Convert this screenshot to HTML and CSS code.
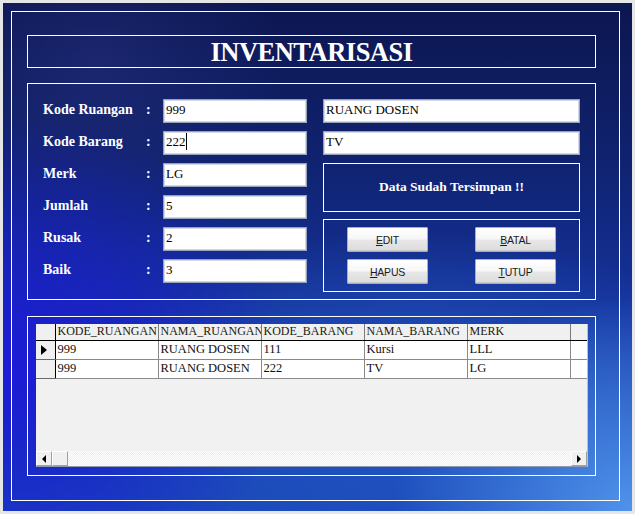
FILE: index.html
```html
<!DOCTYPE html>
<html>
<head>
<meta charset="utf-8">
<link rel="stylesheet" href="styles.css">
</head>
<body>
<div class="window">
  <div class="frame">
    <div class="title-box"><h1 class="title">INVENTARISASI</h1></div>

    <div class="form-box">
      <div class="left-col">
        <div class="row"><span class="label">Kode Ruangan</span><span class="colon">:</span><div class="input">999</div></div>
        <div class="row"><span class="label">Kode Barang</span><span class="colon">:</span><div class="input">222<span class="caret"></span></div></div>
        <div class="row"><span class="label">Merk</span><span class="colon">:</span><div class="input">LG</div></div>
        <div class="row"><span class="label">Jumlah</span><span class="colon">:</span><div class="input">5</div></div>
        <div class="row"><span class="label">Rusak</span><span class="colon">:</span><div class="input">2</div></div>
        <div class="row"><span class="label">Baik</span><span class="colon">:</span><div class="input">3</div></div>
      </div>
      <div class="right-col">
        <div class="input wide">RUANG DOSEN</div>
        <div class="input wide">TV</div>
        <div class="msg">Data Sudah Tersimpan !!</div>
        <div class="btn-box">
          <button class="btn"><u>E</u>DIT</button>
          <button class="btn"><u>B</u>ATAL</button>
          <button class="btn"><u>H</u>APUS</button>
          <button class="btn"><u>T</u>UTUP</button>
        </div>
      </div>
    </div>

    <div class="grid-box">
      <div class="grid">
        <table class="data">
          <colgroup>
            <col class="c-ind"><col class="c-col"><col class="c-col"><col class="c-col"><col class="c-col"><col class="c-col"><col class="c-rest">
          </colgroup>
          <thead>
            <tr>
              <th class="ind"></th>
              <th>KODE_RUANGAN</th>
              <th>NAMA_RUANGAN</th>
              <th>KODE_BARANG</th>
              <th>NAMA_BARANG</th>
              <th>MERK</th>
              <th class="rest"></th>
            </tr>
          </thead>
          <tbody>
            <tr>
              <td class="ind"><span class="pointer"></span></td>
              <td>999</td><td>RUANG DOSEN</td><td>111</td><td>Kursi</td><td>LLL</td><td class="rest"></td>
            </tr>
            <tr>
              <td class="ind"></td>
              <td>999</td><td>RUANG DOSEN</td><td>222</td><td>TV</td><td>LG</td><td class="rest"></td>
            </tr>
          </tbody>
        </table>
        <div class="filler"></div>
        <div class="hscroll">
          <div class="sb-btn"><span class="arrow-left"></span></div>
          <div class="sb-thumb"></div>
          <div class="sb-track"></div>
          <div class="sb-btn"><span class="arrow-right"></span></div>
        </div>
      </div>
    </div>
  </div>
</div>
</body>
</html>
```

FILE: styles.css
```css
* { box-sizing: border-box; }

html, body {
  margin: 0;
  padding: 0;
}

body {
  width: 635px;
  height: 514px;
  background: #e6e6e6;
  padding: 3px;
  font-family: "Liberation Serif", serif;
  overflow: hidden;
}

.window {
  width: 629px;
  height: 508px;
  padding: 8px;
  background:
    radial-gradient(ellipse 38% 42% at 100% 100%, rgba(85, 155, 240, 0.9), rgba(85, 155, 240, 0) 100%),
    radial-gradient(ellipse 45% 50% at 0% 72%, rgba(28, 26, 215, 1), rgba(28, 26, 215, 0) 100%),
    radial-gradient(ellipse 55% 35% at 65% 80%, rgba(40, 95, 200, 0.75), rgba(40, 95, 200, 0) 100%),
    radial-gradient(ellipse 30% 30% at 15% 12%, rgba(40, 50, 130, 0.5), rgba(40, 50, 130, 0) 100%),
    linear-gradient(180deg, #0c1650 0%, #10226e 30%, #1534a0 62%, #1846b8 100%);
}

.frame {
  width: 609px;
  height: 490px;
  border: 1px solid #ffffff;
  padding: 23px 23px 0 15px;
  display: flex;
  flex-direction: column;
}

.title-box {
  height: 33px;
  border: 1px solid #ffffff;
  display: flex;
  align-items: center;
  justify-content: center;
}

.title {
  margin: 0;
  color: #ffffff;
  font-family: "Liberation Serif", serif;
  font-weight: bold;
  font-size: 26.5px;
  letter-spacing: -0.5px;
  line-height: 1;
  padding-top: 1px;
}

.form-box {
  margin-top: 15px;
  border: 1px solid #ffffff;
  padding: 15px 15px 7px 15px;
  display: flex;
  gap: 16px;
  align-items: flex-start;
}

.left-col {
  display: flex;
  flex-direction: column;
  gap: 8px;
}

.row {
  display: flex;
  align-items: center;
  height: 24px;
}

.label {
  width: 103px;
  color: #ffffff;
  font-weight: bold;
  font-size: 14px;
  padding-bottom: 3px;
}

.colon {
  width: 17px;
  color: #ffffff;
  font-weight: bold;
  font-size: 14px;
  padding-bottom: 3px;
}

.input {
  width: 144px;
  height: 24px;
  background: #ffffff;
  border: 1px solid #97a1ba;
  box-shadow: inset 0 0 0 1px #d5d9e4;
  color: #000000;
  font-size: 13px;
  line-height: 18px;
  padding: 0 2px 3px 2px;
  display: flex;
  align-items: center;
}

.input.wide {
  width: 257px;
}

.caret {
  display: inline-block;
  width: 1px;
  height: 17px;
  background: #000000;
  margin-left: 0;
}

.right-col {
  display: flex;
  flex-direction: column;
  width: 257px;
}

.right-col .input + .input {
  margin-top: 8px;
}

.msg {
  margin-top: 8px;
  height: 49px;
  border: 1px solid #ffffff;
  color: #ffffff;
  font-weight: bold;
  font-size: 13.5px;
  display: flex;
  align-items: center;
  justify-content: center;
  padding-bottom: 1px;
}

.btn-box {
  margin-top: 7px;
  height: 73px;
  border: 1px solid #ffffff;
  padding: 7px 23px;
  display: grid;
  grid-template-columns: 81px 81px;
  grid-template-rows: 25px 25px;
  justify-content: space-between;
  row-gap: 7px;
}

.btn {
  margin: 0;
  padding: 0;
  width: 81px;
  height: 25px;
  border: 1px solid #a9afb9;
  border-radius: 1px;
  background: linear-gradient(180deg, #ffffff 0%, #f7f7f7 45%, #e6e6e6 55%, #dcdcdc 100%);
  box-shadow: inset 0 -1px 0 #c9c9c9;
  font-family: "Liberation Sans", sans-serif;
  font-size: 10.5px;
  color: #1a1a1a;
  letter-spacing: -0.2px;
}

.btn u {
  text-decoration: underline;
  text-underline-offset: 1px;
}

.grid-box {
  margin-top: 16px;
  height: 160px;
  border: 1px solid #ffffff;
  padding: 7px 7px 8px 8px;
}

.grid {
  height: 143px;
  background: #f0f1f0;
  display: flex;
  flex-direction: column;
  border-right: 1px solid #b9c1d0;
  border-bottom: 1px solid #8f99b0;
}

.data {
  border-collapse: collapse;
  table-layout: fixed;
  width: 551px;
  font-family: "Liberation Serif", serif;
  font-size: 12.5px;
  color: #111111;
}

.c-ind { width: 19px; }
.c-col { width: 103px; }
.c-rest { width: 17px; }

.data th {
  height: 16px;
  padding: 0 0 0 2px;
  text-align: left;
  font-weight: normal;
  font-size: 12px;
  background: #f0f0f0;
  color: #1a1a10;
  white-space: nowrap;
  overflow: hidden;
  border-right: 1px solid #7a7a7a;
  border-bottom: 1px solid #000000;
  line-height: 15px;
  vertical-align: middle;
}

.data th.rest {
  border-right: none;
}

.data td {
  height: 19px;
  padding: 0 0 1px 2px;
  background: #ffffff;
  white-space: nowrap;
  overflow: hidden;
  border-right: 1px solid #8a8a8a;
  border-bottom: 1px solid #8a8a8a;
  line-height: 17px;
  vertical-align: middle;
}

.data td.rest {
  border-right: none;
}

.data .ind {
  background: #f0f0f0;
  border-right: 1px solid #000000;
  padding: 0;
}

.data td.ind {
  border-bottom: 1px solid #6a6a6a;
}

.pointer {
  display: block;
  width: 0;
  height: 0;
  margin-left: 5px;
  border-top: 5px solid transparent;
  border-bottom: 5px solid transparent;
  border-left: 6px solid #000000;
}

.filler {
  flex: 1;
}

.hscroll {
  height: 15px;
  display: flex;
  background-color: #f7f7f7;
  background-image: repeating-conic-gradient(#ffffff 0% 25%, #eeeeee 0% 50%);
  background-size: 2px 2px;
}

.sb-btn {
  width: 16px;
  height: 15px;
  background: #f0f0f0;
  border: 1px solid;
  border-color: #ffffff #a0a0a0 #a0a0a0 #ffffff;
  display: flex;
  align-items: center;
  justify-content: center;
}

.sb-thumb {
  width: 16px;
  height: 15px;
  background: #f0f0f0;
  border: 1px solid;
  border-color: #ffffff #a0a0a0 #a0a0a0 #ffffff;
}

.sb-track {
  flex: 1;
}

.arrow-left {
  width: 0;
  height: 0;
  border-top: 4px solid transparent;
  border-bottom: 4px solid transparent;
  border-right: 4px solid #000000;
}

.arrow-right {
  width: 0;
  height: 0;
  border-top: 4px solid transparent;
  border-bottom: 4px solid transparent;
  border-left: 4px solid #000000;
}
```
